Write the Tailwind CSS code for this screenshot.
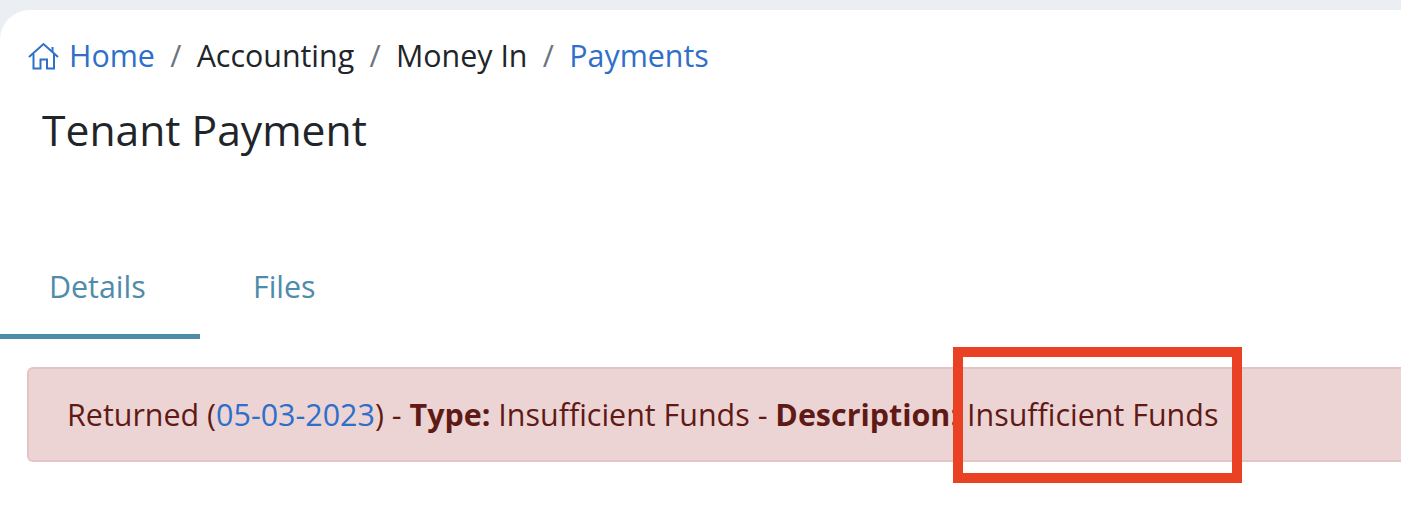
<!DOCTYPE html>
<html lang="en">
<head>
<meta charset="utf-8">
<title>Tenant Payment</title>
<script src="https://cdn.jsdelivr.net/npm/@tailwindcss/browser@4"></script>
</head>
<body class="bg-[#ebeff3] font-['Open_Sans',sans-serif] overflow-hidden">
<div class="relative h-[532px] pt-[10px]">
    <div class="h-full bg-white rounded-tl-[30px] overflow-hidden">
        <!-- Breadcrumb -->
        <nav class="flex items-center pl-[28px] pt-[26px] h-[66px] text-[30.4px] leading-[40px] text-[#212529]">
            <svg class="w-[32px] h-[28px] mr-[9px] text-[#2f6fc9]" viewBox="0 0 32 28" fill="none" stroke="currentColor" stroke-width="2">
                <path d="M1 15 L15.5 2 L30 15"/>
                <path d="M24.5 5 V10"/>
                <path d="M5.5 12 V26.5 H12.5 V17.5 H19 V26.5 H26 V12"/>
            </svg>
            <a class="text-[#2f6fc9]">Home</a>
            <span class="text-[#6c757d] mx-[15.3px]">/</span>
            <span>Accounting</span>
            <span class="text-[#6c757d] mx-[15.3px]">/</span>
            <span>Money In</span>
            <span class="text-[#6c757d] mx-[15.3px]">/</span>
            <a class="text-[#2f6fc9]">Payments</a>
        </nav>
        <h1 class="pl-[42px] mt-[23px] text-[42.6px] leading-[60px] font-normal text-[#212529]">Tenant Payment</h1>
        <!-- Tabs -->
        <div class="flex mt-[107px] text-[30.4px] leading-[40px] text-[#4f8ca9]">
            <div class="w-[200px] h-[73px] pt-[1px] pl-[49px] border-b-[5px] border-[#4f8ca9] font-medium">Details</div>
            <div class="w-[170px] h-[73px] pt-[1px] pl-[53px]">Files</div>
        </div>
        <!-- Alert -->
        <div class="ml-[27px] mt-[28px] h-[95px] flex items-center pl-[38px] bg-[#ecd4d5] border-2 border-r-0 border-[#e6c3c4] rounded-l-[6px] text-[30.45px] text-[#5f1a16] whitespace-pre">Returned (<a class="text-[#2f6fc9]">05-03-2023</a>) - <b class="font-bold">Type:</b> Insufficient Funds - <b class="font-bold">Description:</b> Insufficient Funds</div>
    </div>
    <!-- Annotation box -->
    <div class="absolute left-[953px] top-[347px] w-[289px] h-[136px] border-[10px] border-[#ea4125]"></div>
</div>
</body>
</html>
